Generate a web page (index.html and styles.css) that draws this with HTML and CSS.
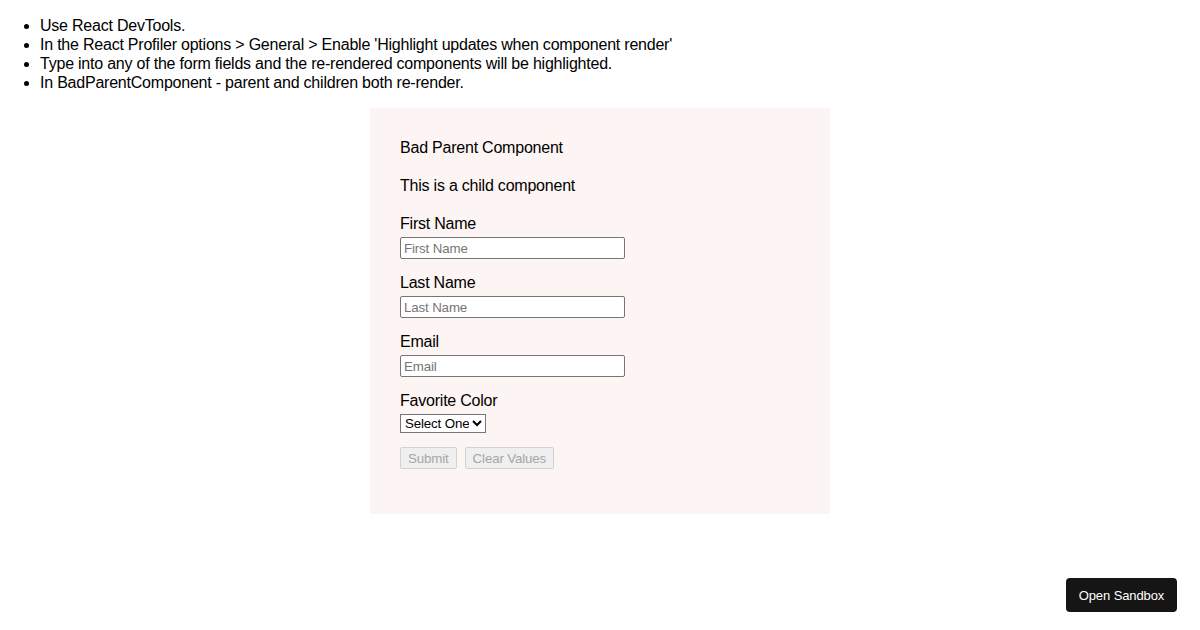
FILE: index.html
```html
<!DOCTYPE html>
<html lang="en">
<head>
    <meta charset="UTF-8">
    <meta name="viewport" content="width=device-width, initial-scale=1.0">
    <link rel="stylesheet" href="styles.css">
</head>
<body>
    <ul class="notes">
        <li>Use React DevTools.</li>
        <li>In the React Profiler options &gt; General &gt; Enable 'Highlight updates when component render'</li>
        <li>Type into any of the form fields and the re-rendered components will be highlighted.</li>
        <li>In BadParentComponent - parent and children both re-render.</li>
    </ul>

    <div class="parent">
        <p class="title">Bad Parent Component</p>
        <p class="child">This is a child component</p>
        <form class="form">
            <div class="field">
                <label for="firstName">First Name</label>
                <input type="text" id="firstName" placeholder="First Name">
            </div>
            <div class="field">
                <label for="lastName">Last Name</label>
                <input type="text" id="lastName" placeholder="Last Name">
            </div>
            <div class="field">
                <label for="email">Email</label>
                <input type="text" id="email" placeholder="Email">
            </div>
            <div class="field">
                <label for="color">Favorite Color</label>
                <select id="color">
                    <option>Select One</option>
                    <option>Red</option>
                    <option>Green</option>
                    <option>Blue</option>
                </select>
            </div>
            <div class="actions">
                <button type="submit" disabled>Submit</button>
                <button type="button" disabled>Clear Values</button>
            </div>
        </form>
    </div>

    <a class="sandbox-link" href="#">Open Sandbox</a>
</body>
</html>
```

FILE: styles.css
```css
body {
    margin: 8px;
    font-family: "Liberation Sans", Arial, sans-serif;
    font-size: 16px;
    line-height: 19px;
    letter-spacing: -0.22px;
    color: #000;
    background: #fff;
}

/* Notes list */
.notes {
    margin: 8px 0 16px;
    padding-left: 32px;
}

/* Parent box */
.parent {
    width: 460px;
    margin: 0 auto;
    padding: 30px;
    box-sizing: border-box;
    background-color: #fdf5f3;
    min-height: 406px;
}
.parent p {
    margin: 0 0 19px;
}

.form {
    display: flex;
    flex-direction: column;
    gap: 14px;
}
.field {
    display: flex;
    flex-direction: column;
    align-items: flex-start;
    gap: 4px;
}
.field input {
    width: 225px;
    height: 22px;
    box-sizing: border-box;
    padding: 1px 3px;
    border: 1px solid #767676;
    border-radius: 2px;
    font-family: "Liberation Sans", Arial, sans-serif;
    font-size: 13.33px;
    letter-spacing: -0.15px;
    background: #fff;
}
.field input::placeholder {
    color: #757575;
}
.field select {
    width: 86px;
    height: 19px;
    font-family: "Liberation Sans", Arial, sans-serif;
    font-size: 13.33px;
    letter-spacing: -0.15px;
    border: 1px solid #767676;
    border-radius: 0;
    background: #fff;
    color: #000;
}

.actions {
    display: flex;
    gap: 8px;
}
.actions button {
    height: 22px;
    padding: 1px 7px;
    font-family: "Liberation Sans", Arial, sans-serif;
    font-size: 13.33px;
    letter-spacing: -0.15px;
    color: #a6a6a6;
    background-color: #efefef;
    border: 1px solid #d2d2d2;
    border-radius: 2px;
}

/* Sandbox button */
.sandbox-link {
    position: fixed;
    right: 23px;
    bottom: 18px;
    width: 111px;
    height: 34px;
    box-sizing: border-box;
    display: flex;
    align-items: center;
    justify-content: center;
    background-color: #151515;
    color: #fff;
    font-size: 13px;
    letter-spacing: -0.1px;
    border-radius: 4px;
    text-decoration: none;
}
```
